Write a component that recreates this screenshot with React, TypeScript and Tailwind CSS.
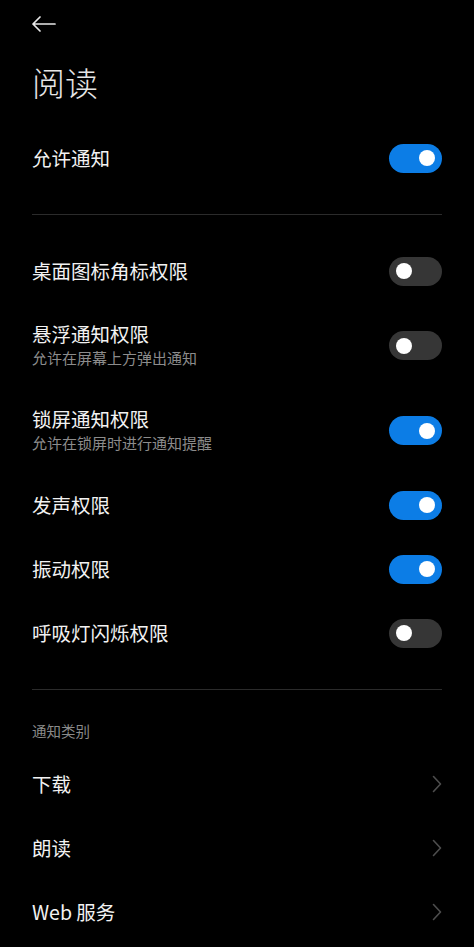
import React from "react";

const font = { fontFamily: '"Noto Sans CJK SC", "Noto Sans", sans-serif' };

function Toggle({ on }: { on: boolean }) {
  return (
    <div
      className={`flex h-[29px] w-[53px] shrink-0 items-center rounded-full px-[7px] ${
        on ? "justify-end bg-[#0c7de6]" : "justify-start bg-[#363636]"
      }`}
    >
      <div className="h-[16px] w-[16px] rounded-full bg-white" />
    </div>
  );
}

function Chevron() {
  return (
    <svg width="10" height="18" viewBox="0 0 10 18" fill="none" className="shrink-0">
      <polyline points="1.5,1.5 8.5,9 1.5,16.5" stroke="#4d4d4d" strokeWidth="1.6" strokeLinecap="round" strokeLinejoin="round" />
    </svg>
  );
}

function ToggleRow({ title, sub, on }: { title: string; sub?: string; on: boolean }) {
  return (
    <div className={`flex items-center justify-between ${sub ? "h-[85px]" : "h-[64px]"}`}>
      <div className="flex flex-col">
        <span className="text-[19.5px] leading-[24px] text-[#f2f2f2]">{title}</span>
        {sub && <span className="mt-[1px] text-[15px] leading-[22px] text-[#8c8c8c]">{sub}</span>}
      </div>
      <Toggle on={on} />
    </div>
  );
}

function NavRow({ title }: { title: string }) {
  return (
    <div className="flex h-[64px] items-center justify-between">
      <span className="text-[19.5px] leading-[24px] text-[#f2f2f2]">{title}</span>
      <Chevron />
    </div>
  );
}

export default function App() {
  return (
    <div className="min-h-screen w-full bg-black px-8" style={font}>
      <div className="flex h-[48px] items-center">
        <svg width="24" height="16" viewBox="0 0 24 16" fill="none">
          <path d="M1 8 H23 M8 1 L1 8 L8 15" stroke="#e8e8e8" strokeWidth="1.7" strokeLinecap="round" strokeLinejoin="round" />
        </svg>
      </div>
      <div className="pb-[24px] pt-[14px]">
        <h1 className="text-[33px] font-light leading-[40px] text-[#e6e6e6]">阅读</h1>
      </div>
      <ToggleRow title="允许通知" on={true} />
      <div className="my-[24px] h-px bg-[#2b2b2b]" />
      <ToggleRow title="桌面图标角标权限" on={false} />
      <ToggleRow title="悬浮通知权限" sub="允许在屏幕上方弹出通知" on={false} />
      <ToggleRow title="锁屏通知权限" sub="允许在锁屏时进行通知提醒" on={true} />
      <ToggleRow title="发声权限" on={true} />
      <ToggleRow title="振动权限" on={true} />
      <ToggleRow title="呼吸灯闪烁权限" on={false} />
      <div className="mt-[24px] h-px bg-[#2b2b2b]" />
      <div className="flex h-[62px] items-end pb-[12px]">
        <span className="text-[14.5px] leading-[18px] text-[#8a8a8a]">通知类别</span>
      </div>
      <NavRow title="下载" />
      <NavRow title="朗读" />
      <NavRow title="Web 服务" />
    </div>
  );
}
